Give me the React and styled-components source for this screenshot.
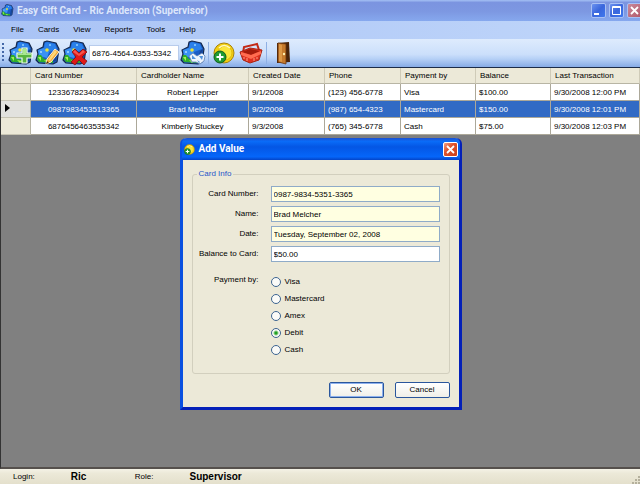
import React, { useState } from 'react';
import styled, { createGlobalStyle } from 'styled-components';

const menus = ['File', 'Cards', 'View', 'Reports', 'Tools', 'Help'];

const columns = [
  { key: 'card', title: 'Card Number', width: 106, center: true },
  { key: 'name', title: 'Cardholder Name', width: 112, center: true },
  { key: 'created', title: 'Created Date', width: 76 },
  { key: 'phone', title: 'Phone', width: 76 },
  { key: 'payment', title: 'Payment by', width: 75 },
  { key: 'balance', title: 'Balance', width: 75 },
  { key: 'last', title: 'Last Transaction' },
];

const cards = [
  {
    card: '1233678234090234',
    name: 'Robert Lepper',
    created: '9/1/2008',
    phone: '(123) 456-6778',
    payment: 'Visa',
    balance: '$100.00',
    last: '9/30/2008 12:00 PM',
  },
  {
    card: '0987983453513365',
    name: 'Brad Melcher',
    created: '9/2/2008',
    phone: '(987) 654-4323',
    payment: 'Mastercard',
    balance: '$150.00',
    last: '9/30/2008 12:01 PM',
  },
  {
    card: '6876456463535342',
    name: 'Kimberly Stuckey',
    created: '9/3/2008',
    phone: '(765) 345-6778',
    payment: 'Cash',
    balance: '$75.00',
    last: '9/30/2008 12:03 PM',
  },
];

const fields = [
  { id: 'cardNumber', label: 'Card Number:', value: '0987-9834-5351-3365', readOnly: true },
  { id: 'name', label: 'Name:', value: 'Brad Melcher', readOnly: true },
  { id: 'date', label: 'Date:', value: 'Tuesday, September 02, 2008', readOnly: true },
  { id: 'balance', label: 'Balance to Card:', value: '$50.00' },
];

const payments = ['Visa', 'Mastercard', 'Amex', 'Debit', 'Cash'];

// gift card tag, the base of most of the toolbar icons
const CardIcon = ({ size = 26, children }) => (
  <svg width={size} height={size} viewBox="0 0 26 26" aria-hidden="true">
    <path
      d="M2 10 L8 7 L9 2 L12 1 L21 3 L24 9 L22 22 L18 24 L4 23 L1 20 L3 14 Z"
      fill="#1b5cc4"
      stroke="#14284c"
      strokeWidth="1.2"
      strokeLinejoin="round"
    />
    <path d="M9 8 L10 3 L12 2 L20 4 L22 9 L14 12 Z" fill="#2a80ea" />
    <path d="M3 10 L9 8 L14 12 L12 18 L4 16 Z" fill="#3a92f4" />
    <path d="M20 11 L23 9 L21 21 L18 22 Z" fill="#174494" />
    <path d="M3 15 L6 15 L9 19 L18 20 L18 23 L4 22 L2 19 Z" fill="#2fae2c" />
    <path d="M3 17 L6 17 L6 21 Z M9 20 L14 21 L12 23 Z" fill="#a6f05a" />
    <circle cx="12" cy="10" r="1.8" fill="#e8e23a" />
    <circle cx="6" cy="12" r="1" fill="#a8dcff" />
    <circle cx="15" cy="5" r="1" fill="#8fd0ff" />
    {children}
  </svg>
);

const AddIcon = () => (
  <CardIcon>
    <path
      d="M14 8h5v5h5v5h-5v5h-5v-5H9v-5h5z"
      fill="#58b440"
      stroke="#f2fff0"
      strokeWidth="1.2"
    />
    <path d="M15 9h3v5h5v1H10v-1h5z" fill="#a8e890" />
  </CardIcon>
);

const EditIcon = () => (
  <CardIcon>
    <path d="M20 9 L24 12 L16 22 L11 24 L12 19 Z" fill="#f0a22a" stroke="#fff3d8" strokeWidth="1" />
    <path d="M20 10 L22 12 L15 21 L13 20 Z" fill="#ffd878" />
    <path d="M11 24 L12 21 L14 23 Z" fill="#4a2c10" />
  </CardIcon>
);

const DeleteIcon = () => (
  <CardIcon>
    <path
      d="M10 12 L13 9 L17 13 L21 9 L25 12 L20 17 L25 21 L22 25 L17 20 L13 25 L9 22 L14 17 Z"
      fill="#e01818"
      stroke="#7c0d10"
      strokeWidth="0.8"
    />
    <path d="M11 12 L13 10 L17 14 L21 10 L23 12 L17 16 Z" fill="#f4544c" />
  </CardIcon>
);

const SearchIcon = () => (
  <CardIcon>
    <path
      d="M9 16 L13 13 L17 16 L22 13 L25 16 L24 21 L20 24 L16 22 L12 22 Z"
      fill="#eef4fc"
      stroke="#5c7fb4"
      strokeWidth="0.8"
    />
    <path d="M12 15 L16 19 L12 19 Z M19 16 L23 16 L22 20 Z M17 20 L20 22 L19 23 Z" fill="#4f92dc" />
  </CardIcon>
);

const CoinIcon = ({ size = 26 }) => (
  <svg width={size} height={size} viewBox="0 0 26 26" aria-hidden="true">
    <circle cx="13" cy="13" r="10" fill="#f3cf12" stroke="#a8820a" />
    <circle cx="14" cy="13" r="7" fill="#fbe63a" stroke="#e0b80e" />
    <path d="M8 8 Q13 3 19 8" fill="none" stroke="#fffbc0" strokeWidth="1.5" />
    <circle cx="9" cy="17" r="6" fill="#219a32" stroke="#0f5c1c" />
    <path d="M9 13.5v7M5.5 17h7" stroke="#fff" strokeWidth="2" />
  </svg>
);

const BasketIcon = () => (
  <svg width="26" height="26" viewBox="0 0 26 26" aria-hidden="true">
    <path d="M5 13 L6 7 L19 4 L21 10" fill="none" stroke="#c42a16" strokeWidth="2" />
    <path d="M2 12 L12 8 L24 10 L21 20 L12 23 L5 20 Z" fill="#de3020" stroke="#a82414" />
    <path d="M4 12 L12 9 L22 11 L13 15 Z" fill="#a41c0c" />
    <path d="M3 12 L13 15 L23 11 L23 14 L13 19 L3 15 Z" fill="#ff6c50" />
    <path d="M6 17v2M9 18v3M16 18v3M19 17v2" stroke="#ff9c86" />
  </svg>
);

const DoorIcon = () => (
  <svg width="26" height="26" viewBox="0 0 26 26" aria-hidden="true">
    <path d="M8 3 L20 2 L21 22 L8 23 Z" fill="#4a2409" />
    <path d="M9 3 L17 4 L17 24 L9 22 Z" fill="#c67a2c" stroke="#6b350c" strokeWidth="0.8" />
    <path d="M10 4 L13 5 L13 22 L10 21 Z" fill="#de9845" />
    <circle cx="15" cy="14" r="1.2" fill="#fff0b0" />
  </svg>
);

const CrossIcon = () => (
  <svg width="9" height="9" viewBox="0 0 9 9" aria-hidden="true">
    <path d="M1 1l7 7M8 1l-7 7" stroke="#fff" strokeWidth="1.8" />
  </svg>
);

const CardGrid = () => (
  <Grid>
    <colgroup>
      <Col $width={30} />
      {columns.map(col => (
        <Col key={col.key} $width={col.width} />
      ))}
    </colgroup>
    <thead>
      <tr>
        <HeadCell />
        {columns.map(col => (
          <HeadCell key={col.key} scope="col">
            {col.title}
          </HeadCell>
        ))}
      </tr>
    </thead>
    <tbody>
      {cards.map((card, i) => (
        <Row key={card.card} $selected={i === 1}>
          <RowHead $current={i === 1}>
            {i === 1 && (
              <svg width="5" height="8" viewBox="0 0 5 8" aria-hidden="true">
                <path d="M0 0l5 4-5 4z" fill="#000" />
              </svg>
            )}
          </RowHead>
          {columns.map(col => (
            <Cell key={col.key} $center={col.center}>
              {card[col.key]}
            </Cell>
          ))}
        </Row>
      ))}
    </tbody>
  </Grid>
);

const AddValueDialog = () => {
  const [payment, setPayment] = useState('Debit');

  return (
    <Dialog role="dialog" aria-labelledby="dialogTitle">
      <DialogBar>
        <CoinIcon size={13} />
        <DialogTitle id="dialogTitle">Add Value</DialogTitle>
        <CaptionButton $tone="close" aria-label="Close">
          <CrossIcon />
        </CaptionButton>
      </DialogBar>
      <Form onSubmit={e => e.preventDefault()}>
        <Group>
          <Legend>Card Info</Legend>
          <Fields>
            {fields.map(field => (
              <React.Fragment key={field.id}>
                <Label htmlFor={field.id}>{field.label}</Label>
                <TextBox
                  id={field.id}
                  defaultValue={field.value}
                  readOnly={field.readOnly}
                />
              </React.Fragment>
            ))}
          </Fields>
          <Payment role="radiogroup" aria-labelledby="paymentLabel">
            <PaymentLabel id="paymentLabel">Payment by:</PaymentLabel>
            <Options>
              {payments.map(option => (
                <Option key={option}>
                  <Radio
                    type="radio"
                    name="payment"
                    value={option}
                    checked={payment === option}
                    onChange={({ target }) => setPayment(target.value)}
                  />
                  {option}
                </Option>
              ))}
            </Options>
          </Payment>
        </Group>
        <Actions>
          <Button type="submit" $primary>
            OK
          </Button>
          <Button type="button">Cancel</Button>
        </Actions>
      </Form>
    </Dialog>
  );
};

const App = () => {
  const [search, setSearch] = useState('6876-4564-6353-5342');

  return (
    <Window>
      <GlobalStyle />
      <TitleBar>
        <CardIcon size={13} />
        <Title>Easy Gift Card - Ric Anderson (Supervisor)</Title>
        <CaptionButton aria-label="Minimize">
          <svg width="9" height="9" viewBox="0 0 9 9" aria-hidden="true">
            <path d="M0 8h5" stroke="#fff" strokeWidth="2" />
          </svg>
        </CaptionButton>
        <CaptionButton aria-label="Maximize">
          <svg width="9" height="9" viewBox="0 0 9 9" aria-hidden="true">
            <path d="M0.5 0.5h8v8h-8zM0 1.5h9" fill="none" stroke="#fff" />
          </svg>
        </CaptionButton>
        <CaptionButton $tone="inactive" aria-label="Close window">
          <CrossIcon />
        </CaptionButton>
      </TitleBar>
      <MenuBar>
        {menus.map(menu => (
          <MenuItem key={menu}>{menu}</MenuItem>
        ))}
      </MenuBar>
      <Toolbar>
        <Grip />
        <ToolButton aria-label="Add card">
          <AddIcon />
        </ToolButton>
        <ToolButton aria-label="Edit card">
          <EditIcon />
        </ToolButton>
        <ToolButton aria-label="Delete card">
          <DeleteIcon />
        </ToolButton>
        <SearchBox
          aria-label="Card number"
          value={search}
          onChange={({ target }) => setSearch(target.value)}
        />
        <ToolButton aria-label="Find card">
          <SearchIcon />
        </ToolButton>
        <Separator />
        <ToolButton aria-label="Add value">
          <CoinIcon />
        </ToolButton>
        <ToolButton aria-label="Purchase">
          <BasketIcon />
        </ToolButton>
        <Separator />
        <ToolButton aria-label="Exit">
          <DoorIcon />
        </ToolButton>
      </Toolbar>
      <Workspace>
        <CardGrid />
        <Overlay>
          <AddValueDialog />
        </Overlay>
      </Workspace>
      <StatusBar>
        <StatusLabel>Login:</StatusLabel>
        <StatusValue>Ric</StatusValue>
        <StatusLabel>Role:</StatusLabel>
        <StatusValue>Supervisor</StatusValue>
        <SizeGrip viewBox="0 0 8 8" aria-hidden="true">
          <path d="M6 0h2v2H6zM3 3h2v2H3zM6 3h2v2H6zM0 6h2v2H0zM3 6h2v2H3zM6 6h2v2H6z" fill="#b4b09c" />
        </SizeGrip>
      </StatusBar>
    </Window>
  );
};

export default App;

//styles

const GlobalStyle = createGlobalStyle`
  * {
    box-sizing: border-box;
  }
  body {
    margin: 0;
    font: 8px/12px 'Liberation Sans', Arial, sans-serif;
    color: #000;
  }
  button, input {
    font: inherit;
    color: inherit;
    margin: 0;
  }
`;

const Window = styled.div`
  display: flex;
  flex-direction: column;
  min-height: 100vh;
  overflow: hidden;
`;

const TitleBar = styled.header`
  display: flex;
  align-items: center;
  gap: 3px;
  height: 21px;
  padding-left: 1px;
  margin-right: -2px;
  background: linear-gradient(#a4c0f4, #7b94e0 12%, #7d98e2 55%, #86a8ee);
`;

const Title = styled.h1`
  flex: 1;
  margin: 0;
  font: bold 10px/14px Roboto, 'Liberation Sans', sans-serif;
  color: #dce6fb;
  white-space: nowrap;
`;

const tones = {
  close: 'linear-gradient(135deg, #f0a088, #e0532c 40%, #c8401c)',
  inactive: 'linear-gradient(135deg, #c88a9c, #b4596a)',
  normal: 'linear-gradient(135deg, #6c93f0, #3a66dc 50%, #3f78ee)',
};

const CaptionButton = styled.button`
  display: flex;
  align-items: center;
  justify-content: center;
  flex: none;
  width: 15px;
  height: 15px;
  padding: 0;
  border: 1px solid ${({ $tone }) => ($tone === 'close' ? '#fff' : '#a8c0f4')};
  border-radius: 2px;
  background: ${({ $tone }) => tones[$tone || 'normal']};
`;

const MenuBar = styled.nav`
  display: flex;
  align-items: center;
  gap: 14px;
  height: 18px;
  padding-left: 11px;
  background: linear-gradient(90deg, #a9c3f5, #c0d6fa);
`;

const MenuItem = styled.button`
  padding: 0;
  border: 0;
  background: none;
`;

const Toolbar = styled.div`
  display: flex;
  align-items: center;
  gap: 1px;
  height: 29px;
  padding-left: 2px;
  border-bottom: 1px solid #1c2c48;
  background: linear-gradient(#deebfd, #cbdffb 55%, #b4cff6 72%, #86abe6);
`;

const Grip = styled.div`
  width: 2px;
  height: 20px;
  margin-right: 3px;
  background: repeating-linear-gradient(#4468a8 0 2px, transparent 2px 4px);
`;

const ToolButton = styled.button`
  display: flex;
  flex: none;
  padding: 0;
  border: 0;
  background: none;
`;

const SearchBox = styled.input`
  width: 90px;
  height: 16px;
  padding: 0 2px;
  border: 1px solid #b8ccec;
  background: #fff;
`;

const Separator = styled.div`
  width: 1px;
  height: 22px;
  margin: 0 1px;
  background: #8fb0e4;
`;

const Workspace = styled.main`
  position: relative;
  flex: 1;
  min-height: 360px;
  border-left: 1px solid #333;
  border-bottom: 2px solid #55504c;
  background: #808080;
`;

const Grid = styled.table`
  width: 100%;
  table-layout: fixed;
  border-collapse: separate;
  border-spacing: 0;
`;

const Col = styled.col`
  width: ${({ $width }) => ($width ? `${$width}px` : 'auto')};
`;

const HeadCell = styled.th`
  height: 16px;
  padding: 1px 4px 0;
  border-right: 1px solid #cfcbb8;
  border-bottom: 1px solid #b8b5a4;
  background: #ece9d8;
  font-weight: normal;
  text-align: left;
  white-space: nowrap;
`;

const RowHead = styled.td`
  padding: 0 4px;
  border-right: 1px solid #b8b5a4;
  border-bottom: 1px solid #c8c5b4;
  background: ${({ $current }) => ($current ? '#e2e2de' : '#ece9d8')};
  line-height: 8px;
`;

const Cell = styled.td`
  padding: 2px 3px 0;
  border-right: 1px solid #aca899;
  border-bottom: 1px solid #aca899;
  text-align: ${({ $center }) => ($center ? 'center' : 'left')};
  white-space: nowrap;
`;

const Row = styled.tr`
  height: 17px;
  background: ${({ $selected }) => ($selected ? '#316ac5' : '#fff')};
  color: ${({ $selected }) => ($selected ? '#fff' : '#000')};
`;

// the dialog floats over the grid
const Overlay = styled.div`
  position: absolute;
  inset: 0;
  display: flex;
  align-items: flex-start;
  justify-content: center;
  padding-top: 70px;
`;

const Dialog = styled.section`
  width: 282px;
  border: 3px solid;
  border-color: #0a50e0 #0420b8 #0420b8 #0a50e0;
  border-top: 0;
  border-radius: 6px 6px 0 0;
  background: #ece9d8;
`;

const DialogBar = styled.div`
  display: flex;
  align-items: center;
  gap: 3px;
  height: 22px;
  padding: 0 2px 0 1px;
  margin: 0 -1px;
  border-radius: 5px 5px 0 0;
  background: linear-gradient(#1c50d0, #0a6cf8 15%, #0456e4 40%, #0566fa 85%, #0444c8);
`;

const DialogTitle = styled.h2`
  flex: 1;
  margin: 0;
  font: bold 10px/14px Roboto, 'Liberation Sans', sans-serif;
  color: #fff;
`;

const Form = styled.form`
  padding: 8px 9px 9px;
`;

const Group = styled.fieldset`
  min-width: 0;
  height: 206px;
  margin: 0;
  padding: 6px 9px 0 0;
  border: 1px solid #d2cfbe;
  border-radius: 3px;
`;

const Legend = styled.legend`
  margin-left: 4px;
  padding: 0 2px;
  color: #1f55c8;
`;

const Fields = styled.div`
  display: grid;
  grid-template-columns: 66px 1fr;
  align-items: center;
  gap: 4px 12px;
`;

const Label = styled.label`
  text-align: right;
  white-space: nowrap;
`;

const TextBox = styled.input`
  width: 100%;
  height: 16px;
  padding: 0 2px;
  border: 1px solid #8fabc8;
  background: ${({ readOnly }) => (readOnly ? '#ffffe1' : '#fff')};
`;

const Payment = styled.div`
  display: grid;
  grid-template-columns: 66px 1fr;
  gap: 12px;
  margin-top: 12px;
`;

const PaymentLabel = styled.span`
  text-align: right;
`;

const Options = styled.div`
  display: flex;
  flex-direction: column;
  align-items: flex-start;
  gap: 5px;
  padding-top: 2px;
`;

const Option = styled.label`
  display: flex;
  align-items: center;
  gap: 4px;
`;

const Radio = styled.input`
  appearance: none;
  width: 10px;
  height: 10px;
  border: 1px solid #3c6490;
  border-radius: 50%;
  background: #fbfbf8;

  &:checked {
    background: radial-gradient(circle, #21a121 0 1px, #fbfbf8 3px);
  }
`;

const Actions = styled.div`
  display: flex;
  justify-content: flex-end;
  gap: 11px;
  margin-top: 8px;
`;

const Button = styled.button`
  width: 55px;
  height: 16px;
  padding: 0;
  border: 1px solid #2a569c;
  border-radius: 2px;
  background: linear-gradient(#fff, #f0efe8);
  box-shadow: ${({ $primary }) => ($primary ? 'inset 0 0 0 1px #8cb0ee' : 'none')};
`;

const StatusBar = styled.footer`
  display: flex;
  align-items: center;
  height: 15px;
  padding-left: 13px;
  background: linear-gradient(#f4f2e6, #ece9d8 30%, #e4e0cc);
`;

const StatusLabel = styled.span`
  padding-right: 36px;
`;

const StatusValue = styled.strong`
  min-width: 64px;
  font: bold 10px/12px 'Liberation Sans', sans-serif;
`;

const SizeGrip = styled.svg`
  align-self: flex-end;
  width: 8px;
  height: 8px;
  margin-left: auto;
`;
